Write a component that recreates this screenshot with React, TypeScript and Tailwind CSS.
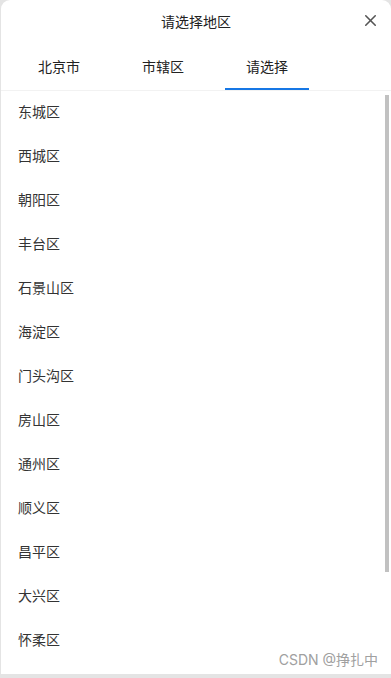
import { X } from "lucide-react";

const TABS = ["北京市", "市辖区", "请选择"];

const DISTRICTS = [
  "东城区",
  "西城区",
  "朝阳区",
  "丰台区",
  "石景山区",
  "海淀区",
  "门头沟区",
  "房山区",
  "通州区",
  "顺义区",
  "昌平区",
  "大兴区",
  "怀柔区",
];

export default function App() {
  const active = 2;
  return (
    <div
      className="flex h-[678px] w-[391px] flex-col overflow-hidden bg-[#9a9a9a]"
      style={{ fontFamily: '"Inter", "Noto Sans CJK SC", sans-serif' }}
    >
      <div className="flex min-h-0 flex-1 flex-col bg-[#e4e4e4] pb-1 pl-px">
        <div className="relative flex min-h-0 flex-1 flex-col overflow-hidden rounded-t-[9px] bg-white">
          {/* header */}
          <div className="relative flex h-[42px] shrink-0 items-center justify-center">
            <span className="text-[14px] text-[#222]">请选择地区</span>
            <button className="absolute right-[11px] top-[11px] text-[#555]">
              <X size={19} strokeWidth={2} />
            </button>
          </div>

          {/* tabs */}
          <div className="flex h-[49px] shrink-0 border-b border-[#f2f2f2] pl-[6px]">
            {TABS.map((t, i) => (
              <div key={t} className="relative flex w-[104px] items-center justify-center">
                <span className="text-[14px] text-[#222]">{t}</span>
                {i === active && (
                  <span className="absolute bottom-0 left-[10px] right-[10px] h-[2px] bg-[#1677e5]" />
                )}
              </div>
            ))}
          </div>

          {/* list */}
          <div className="relative min-h-0 flex-1 overflow-hidden">
            <ul className="flex flex-col">
              {DISTRICTS.map((d) => (
                <li key={d} className="flex h-[44px] shrink-0 items-center pb-[3px] pl-[17px] text-[14px] text-[#333]">
                  {d}
                </li>
              ))}
            </ul>
            <div className="absolute right-[2px] top-[4px] h-[477px] w-[4px] bg-[#c1c1c1]" />
            <span className="absolute bottom-[4px] right-[13px] text-[14px] text-[#a0a0a0]">
              CSDN @挣扎中
            </span>
          </div>
        </div>
      </div>
    </div>
  );
}
